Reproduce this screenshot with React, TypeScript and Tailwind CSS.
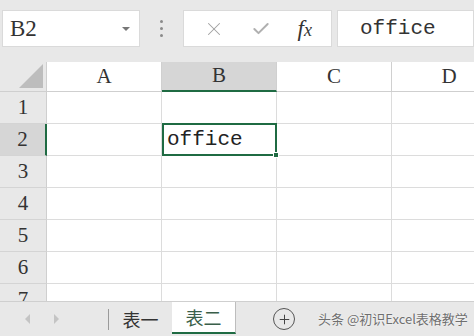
import { X, Check, Plus } from "lucide-react"

const cols = ["A", "B", "C", "D"]
const rows = [1, 2, 3, 4, 5, 6, 7]

function HeaderCell({ label, selected }: { label: string; selected?: boolean }) {
  return (
    <div
      className={`flex items-center justify-center border-r border-[#d0d0d0] text-[21px] text-[#333] ${
        selected ? "bg-[#d6d6d6] border-b-2 border-b-[#1f6b43]" : "border-b border-b-[#cfcfcf]"
      }`}
    >
      {label}
    </div>
  )
}

function RowHeader({ n, selected }: { n: number; selected?: boolean }) {
  return (
    <div
      className={`flex items-center justify-center border-b border-[#d4d4d4] text-[21px] text-[#333] ${
        selected ? "bg-[#d6d6d6] border-r-2 border-r-[#1f6b43]" : "bg-[#e8e8e8] border-r border-r-[#cfcfcf]"
      }`}
    >
      {n}
    </div>
  )
}

export default function App() {
  return (
    <div className="w-[474px] h-[336px] flex flex-col overflow-hidden bg-[#e8e8e8] [font-family:'Liberation_Serif',serif]">
      {/* Toolbar */}
      <div className="h-[62px] shrink-0 flex items-start pt-[10px] pl-[2px]">
        <div className="w-[138px] h-[37px] bg-white border border-[#dadada] flex items-center justify-between pl-[7px] pr-[9px]">
          <span className="text-[23px] text-[#333] leading-none">B2</span>
          <span className="w-0 h-0 border-l-[4px] border-r-[4px] border-t-[4px] border-l-transparent border-r-transparent border-t-[#777]" />
        </div>
        <div className="w-[43px] h-[37px] flex flex-col items-center justify-center gap-[4px]">
          <span className="w-[3px] h-[3px] rounded-full bg-[#8a8a8a]" />
          <span className="w-[3px] h-[3px] rounded-full bg-[#8a8a8a]" />
          <span className="w-[3px] h-[3px] rounded-full bg-[#8a8a8a]" />
        </div>
        <div className="w-[149px] h-[37px] bg-white border border-[#dadada] flex items-center justify-around px-[6px]">
          <X className="w-[22px] h-[22px] text-[#a0a0a0]" strokeWidth={1.1} />
          <Check className="w-[20px] h-[20px] text-[#b0b0b0]" strokeWidth={2.4} />
          <span className="italic text-[23px] text-[#333] leading-none">
            f<span className="text-[18px]">x</span>
          </span>
        </div>
        <div className="ml-[5px] flex-1 h-[37px] bg-white border border-[#dadada] flex items-center pl-[22px]">
          <span className="[font-family:'Liberation_Mono',monospace] text-[21px] text-[#333] leading-none">office</span>
        </div>
      </div>

      {/* Grid */}
      <div className="flex-1 overflow-hidden">
        <div className="grid grid-cols-[47px_115px_115px_115px_115px] grid-rows-[30px_repeat(7,32px)] bg-white">
          <div className="relative bg-[#e8e8e8] border-r border-b border-[#cfcfcf]">
            <svg className="absolute right-[3px] bottom-[3px]" width="24" height="24" viewBox="0 0 24 24">
              <polygon points="24,0 24,24 0,24" fill="#bdbdbd" />
            </svg>
          </div>
          {cols.map((c) => (
            <HeaderCell key={c} label={c} selected={c === "B"} />
          ))}
          {rows.map((r) => (
            <div key={r} className="contents">
              <RowHeader n={r} selected={r === 2} />
              {cols.map((c) =>
                r === 2 && c === "B" ? (
                  <div key={c} className="relative border-2 border-[#1f6b43] flex items-center pl-[3px] -mt-px">
                    <span className="[font-family:'Liberation_Mono',monospace] text-[21px] text-[#222] leading-none">office</span>
                    <span className="absolute -right-[4px] -bottom-[4px] w-[6px] h-[6px] bg-[#1f6b43] border border-white" />
                  </div>
                ) : (
                  <div key={c} className="border-r border-b border-[#dcdcdc]" />
                )
              )}
            </div>
          ))}
        </div>
      </div>

      {/* Sheet tabs */}
      <div className="h-[35px] shrink-0 flex items-stretch border-t border-[#cfcfcf] bg-[#e8e8e8] [font-family:'Noto_Sans_CJK_SC',sans-serif]">
        <div className="w-[108px] flex items-center pl-[25px] gap-[24px]">
          <span className="w-0 h-0 border-t-[5px] border-b-[5px] border-r-[5px] border-t-transparent border-b-transparent border-r-[#c4c4c4]" />
          <span className="w-0 h-0 border-t-[5px] border-b-[5px] border-l-[5px] border-t-transparent border-b-transparent border-l-[#c4c4c4]" />
        </div>
        <div className="flex items-center">
          <span className="w-px h-[21px] bg-[#9a9a9a]" />
        </div>
        <div className="w-[63px] flex items-center justify-center text-[18px] text-[#333]">表一</div>
        <div className="w-[64px] bg-white border-r border-[#bdbdbd] border-b-2 border-b-[#1f6b43] mb-[2px] flex items-center justify-center text-[18px] text-[#3a5f4a]">
          表二
        </div>
        <div className="w-[82px] flex items-center pl-[37px]">
          <div className="w-[22px] h-[22px] rounded-full border border-[#555] flex items-center justify-center">
            <Plus className="w-[15px] h-[15px] text-[#444]" strokeWidth={1.6} />
          </div>
        </div>
        <div className="flex items-center text-[13px] text-[#6f6f6f] [text-shadow:0_0_2px_#fff]">
          头条 @初识Excel表格教学
        </div>
      </div>
    </div>
  )
}
